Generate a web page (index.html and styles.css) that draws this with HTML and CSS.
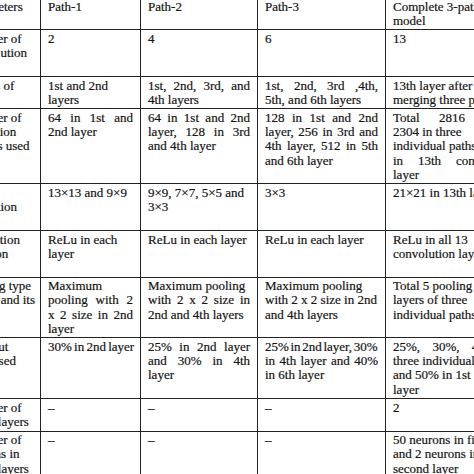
FILE: index.html
```html
<!DOCTYPE html>
<html>
<head>
<meta charset="utf-8">
<link rel="stylesheet" href="styles.css">
</head>
<body>
<table class="tbl">
  <colgroup>
    <col class="c1"><col class="c2"><col class="c3"><col class="c4"><col class="c5">
  </colgroup>
  <tr>
    <td><span class="l">Parameters</span></td>
    <td><span class="l">Path-1</span></td>
    <td><span class="l">Path-2</span></td>
    <td><span class="l">Path-3</span></td>
    <td><span class="l">Complete 3-path</span><span class="l">model</span></td>
  </tr>
  <tr>
    <td><span class="l">Number of</span><span class="l">convolution</span><span class="l">layers</span></td>
    <td><span class="l">2</span></td>
    <td><span class="l">4</span></td>
    <td><span class="l">6</span></td>
    <td><span class="l">13</span></td>
  </tr>
  <tr>
    <td><span class="l">Layers of</span><span class="l">filters</span></td>
    <td><span class="l">1st and 2nd</span><span class="l">layers</span></td>
    <td><span class="l j">1st, 2nd, 3rd, and</span><span class="l">4th layers</span></td>
    <td><span class="l j">1st, 2nd, 3rd ,4th,</span><span class="l">5th, and 6th layers</span></td>
    <td><span class="l">13th layer after</span><span class="l">merging three paths</span></td>
  </tr>
  <tr>
    <td><span class="l">Number of</span><span class="l">activation</span><span class="l">kernels used</span></td>
    <td><span class="l j">64 in 1st and</span><span class="l">2nd layer</span></td>
    <td><span class="l j">64 in 1st and 2nd</span><span class="l j">layer, 128 in 3rd</span><span class="l">and 4th layer</span></td>
    <td><span class="l j">128 in 1st and 2nd</span><span class="l j">layer, 256 in 3rd and</span><span class="l j">4th layer, 512 in 5th</span><span class="l">and 6th layer</span></td>
    <td><span class="l j">Total 2816 filters,</span><span class="l">2304 in three</span><span class="l">individual paths</span><span class="l j">in 13th convolution</span><span class="l">layer</span></td>
  </tr>
  <tr>
    <td><span class="l">Filter</span><span class="l">resolution</span><span class="l">used</span></td>
    <td><span class="l">13×13 and 9×9</span></td>
    <td><span class="l">9×9, 7×7, 5×5 and</span><span class="l">3×3</span></td>
    <td><span class="l">3×3</span></td>
    <td><span class="l">21×21 in 13th layer</span></td>
  </tr>
  <tr>
    <td><span class="l">Activation</span><span class="l">function</span><span class="l">used</span></td>
    <td><span class="l">ReLu in each</span><span class="l">layer</span></td>
    <td><span class="l">ReLu in each layer</span></td>
    <td><span class="l">ReLu in each layer</span></td>
    <td><span class="l">ReLu in all 13</span><span class="l">convolution layers</span></td>
  </tr>
  <tr>
    <td><span class="l">Pooling type</span><span class="l">kernel and its</span><span class="l">size</span></td>
    <td><span class="l">Maximum</span><span class="l j">pooling with 2</span><span class="l j">x 2 size in 2nd</span><span class="l">layer</span></td>
    <td><span class="l">Maximum pooling</span><span class="l j">with 2 x 2 size in</span><span class="l">2nd and 4th layers</span></td>
    <td><span class="l">Maximum pooling</span><span class="l">with 2 x 2 size in 2nd</span><span class="l">and 4th layers</span></td>
    <td><span class="l">Total 5 pooling</span><span class="l">layers of three</span><span class="l">individual paths</span></td>
  </tr>
  <tr>
    <td><span class="l">Dropout</span><span class="l">ratio used</span></td>
    <td><span class="l t1">30% in 2nd layer</span></td>
    <td><span class="l j">25% in 2nd layer</span><span class="l j">and 30% in 4th</span><span class="l">layer</span></td>
    <td><span class="l t2">25% in 2nd layer, 30%</span><span class="l j">in 4th layer and 40%</span><span class="l">in 6th layer</span></td>
    <td><span class="l j">25%, 30%, 40% in</span><span class="l">three individual</span><span class="l">and 50% in 1st dense</span><span class="l">layer</span></td>
  </tr>
  <tr>
    <td><span class="l">Number of</span><span class="l">dense layers</span></td>
    <td><span class="l">–</span></td>
    <td><span class="l">–</span></td>
    <td><span class="l">–</span></td>
    <td><span class="l">2</span></td>
  </tr>
  <tr>
    <td><span class="l">Number of</span><span class="l">neurons in</span><span class="l">dense layers</span></td>
    <td><span class="l">–</span></td>
    <td><span class="l">–</span></td>
    <td><span class="l">–</span></td>
    <td><span class="l">50 neurons in first</span><span class="l">and 2 neurons in</span><span class="l">second layer</span></td>
  </tr>
</table>
</body>
</html>
```

FILE: styles.css
```css
html, body {
  margin: 0;
  padding: 0;
  overflow: hidden;
  background: #ffffff;
}

body {
  width: 474px;
  height: 474px;
  font-family: "Liberation Serif", "Times New Roman", serif;
  font-size: 13px;
  color: #141414;
  -webkit-text-stroke: 0.2px #141414;
}

.tbl {
  border-collapse: collapse;
  table-layout: fixed;
  width: 568px;
  margin-left: -43px;
  margin-top: -3px;
}

.c1 { width: 83px; }
.c2 { width: 100px; }
.c3 { width: 117px; }
.c4 { width: 128px; }
.c5 { width: 140px; }

.tbl td {
  border: 1px solid #222222;
  padding: 1.5px 7px;
  vertical-align: top;
  line-height: 14.2px;
  overflow: hidden;
}

.tbl td:first-child {
  overflow: visible;
}

.l {
  display: block;
  white-space: nowrap;
  text-align: left;
}

.j {
  text-align: justify;
  text-align-last: justify;
}

.t1 {
  word-spacing: -1px;
}

.t2 {
  word-spacing: -1.6px;
}
```
